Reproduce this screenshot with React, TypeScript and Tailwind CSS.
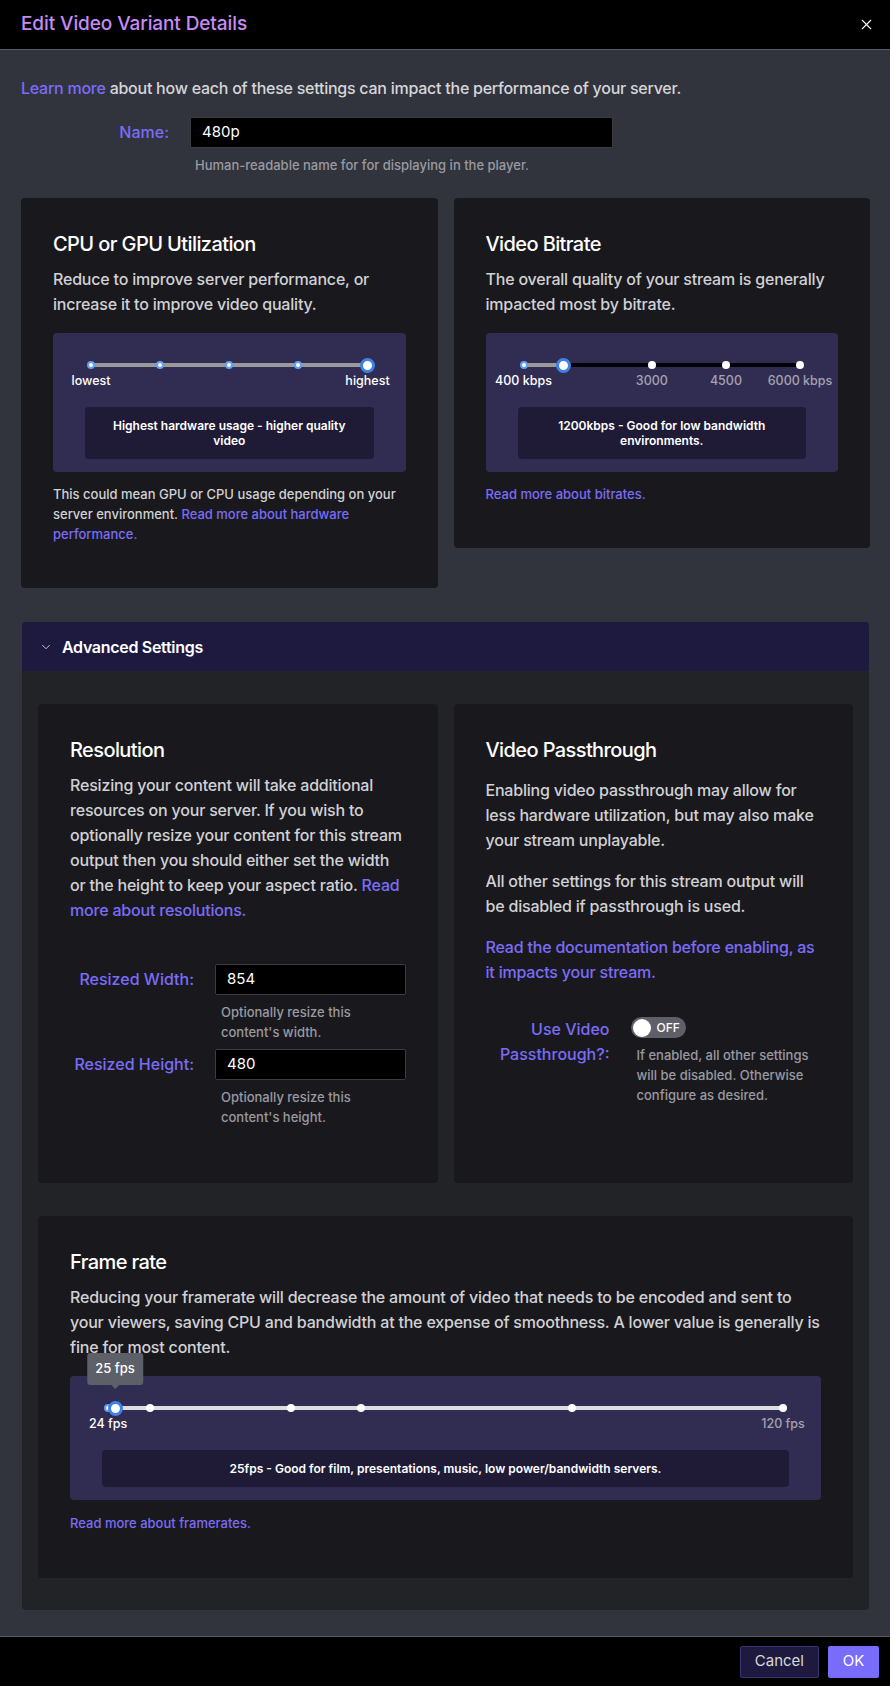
import { X, ChevronDown } from "lucide-react"

type Mark = { pos: number; label?: string; bright?: boolean; active?: boolean }

type SliderProps = {
  marks: Mark[]
  handle: number
  fill: string
  rail: string
  note: string
  tooltip?: string
}

// slider inside the purple box, dots are placed by percentage of the range
function Slider({ marks, handle, fill, rail, note, tooltip }: SliderProps) {
  return (
    <div className="bg-[#312c52] rounded-[4px] px-[32px] pb-[13px]">
      <div className="px-[6px] pt-[25px]">
        <div className="relative h-[14px]">
          <div className={`absolute left-0 right-0 top-[5px] h-[4px] rounded-full ${rail}`} />
          <div
            className={`absolute left-0 top-[5px] h-[4px] rounded-full ${fill}`}
            style={{ width: `${handle}%` }}
          />
          {marks.map((m, i) => (
            <div
              key={i}
              className={`absolute top-[3px] w-[8px] h-[8px] -ml-[4px] rounded-full bg-white ${
                m.active ? "border-2 border-[#62a0f5]" : ""
              }`}
              style={{ left: `${m.pos}%` }}
            />
          ))}
          <div
            className="absolute top-0 w-[15px] h-[15px] -ml-[7.5px] -mt-[0.5px] rounded-full bg-white border-[3px] border-[#3f82e6]"
            style={{ left: `${handle}%` }}
          />
          {tooltip && (
            <div
              className="absolute bottom-[26px] -translate-x-1/2 flex flex-col items-center"
              style={{ left: `${handle}%` }}
            >
              <div className="bg-[#5d5f69] rounded-[3px] px-[8px] h-[32px] flex items-center text-[13px] font-medium text-white whitespace-nowrap">
                {tooltip}
              </div>
              <div className="w-0 h-0 border-l-[4px] border-r-[4px] border-t-[4px] border-l-transparent border-r-transparent border-t-[#5d5f69]" />
            </div>
          )}
        </div>
        <div className="relative h-[18px]">
          {marks
            .filter((m) => m.label)
            .map((m, i) => (
              <span
                key={i}
                className={`absolute top-0 -translate-x-1/2 whitespace-nowrap text-[12.5px] leading-[18px] font-medium ${
                  m.bright ? "text-white" : "text-[#a3a3ad]"
                }`}
                style={{ left: `${m.pos}%` }}
              >
                {m.label}
              </span>
            ))}
        </div>
      </div>
      <div className="mt-[17px] bg-[#1f1b37] rounded-[4px] px-[20px] py-[11px] text-center text-[12px] leading-[15px] font-semibold text-white">
        {note}
      </div>
    </div>
  )
}

function Card({ title, children, className = "" }: { title: string; children: React.ReactNode; className?: string }) {
  return (
    <div className={`bg-[#19191d] rounded-[4px] px-[32px] pt-[31px] ${className}`}>
      <h3 className="text-[20px] leading-[30px] font-medium text-white tracking-[-0.6px]">{title}</h3>
      {children}
    </div>
  )
}

function Desc({
  children,
  className = "",
  color = "text-[#d1d1d5]",
}: {
  children: React.ReactNode
  className?: string
  color?: string
}) {
  return (
    <p className={`text-[16px] leading-[25px] font-medium tracking-[-0.2px] ${color} ${className}`}>{children}</p>
  )
}

const link = "text-[#7b6cf8]"

function FieldRow({ label, value, help }: { label: string; value: string; help: string }) {
  return (
    <div className="flex">
      <div className="w-[124px] shrink-0 text-right text-[16px] leading-[31px] font-medium text-[#7b6cf8]">{label}</div>
      <div className="flex-1 ml-[21px]">
        <div className="h-[31px] bg-black border border-[#3b3b40] rounded-[2px] flex items-center px-[11px] text-[15px] text-white">
          {value}
        </div>
        <p className="mt-[7px] pl-[6px] max-w-[165px] text-[13px] leading-[20px] font-medium text-[#9a9aa2]">{help}</p>
      </div>
    </div>
  )
}

export default function App() {
  return (
    <div className="w-[890px] min-h-[1686px] bg-[#31343c] font-['Inter',sans-serif] flex flex-col">
      {/* Header */}
      <div className="h-[50px] bg-black border-b border-[#5c5c5f] flex items-center justify-between pl-[21px] pr-[15px]">
        <h1 className="text-[19px] font-medium text-[#c58bf7] tracking-[-0.1px]">Edit Video Variant Details</h1>
        <X className="w-[17px] h-[17px] text-white" strokeWidth={1.5} />
      </div>

      {/* Body */}
      <div className="flex-1 pl-[21px] pr-[20px] pt-[27px] pb-[25px]">
        <p className="text-[16px] leading-[22px] font-medium text-[#d6d6da] tracking-[-0.25px]">
          <span className={link}>Learn more</span> about how each of these settings can impact the performance of your
          server.
        </p>

        <div className="mt-[18px] flex">
          <div className="w-[148px] shrink-0 text-right text-[16px] leading-[31px] font-medium text-[#7b6cf8]">Name:</div>
          <div className="ml-[21px] w-[423px]">
            <div className="h-[31px] bg-black border border-[#3b3b40] rounded-[2px] flex items-center px-[11px] text-[15px] text-white">
              480p
            </div>
            <p className="mt-[8px] pl-[5px] text-[13px] leading-[18px] font-medium text-[#9a9aa2]">
              Human-readable name for for displaying in the player.
            </p>
          </div>
        </div>

        {/* Top cards */}
        <div className="mt-[24px] grid grid-cols-2 gap-[16px] items-start">
          <Card title="CPU or GPU Utilization" className="pb-[44px]">
            <Desc className="mt-[8px]">Reduce to improve server performance, or increase it to improve video quality.</Desc>
            <div className="mt-[16px]">
              <Slider
                marks={[
                  { pos: 0, label: "lowest", bright: true, active: true },
                  { pos: 25, active: true },
                  { pos: 50, active: true },
                  { pos: 75, active: true },
                  { pos: 100, label: "highest", bright: true, active: true },
                ]}
                handle={100}
                fill="bg-[#9a9a9a]"
                rail="bg-black"
                note="Highest hardware usage - higher quality video"
              />
            </div>
            <p className="mt-[12px] text-[13px] leading-[20px] font-medium text-[#d1d1d5]">
              This could mean GPU or CPU usage depending on your server environment.{" "}
              <span className={link}>Read more about hardware performance.</span>
            </p>
          </Card>

          <Card title="Video Bitrate" className="pb-[44px]">
            <Desc className="mt-[8px]">The overall quality of your stream is generally impacted most by bitrate.</Desc>
            <div className="mt-[16px]">
              <Slider
                marks={[
                  { pos: 0, label: "400 kbps", bright: true, active: true },
                  { pos: 46.43, label: "3000" },
                  { pos: 73.21, label: "4500" },
                  { pos: 100, label: "6000 kbps" },
                ]}
                handle={14.29}
                fill="bg-[#9a9a9a]"
                rail="bg-black"
                note="1200kbps - Good for low bandwidth environments."
              />
            </div>
            <p className={`mt-[12px] text-[13px] leading-[20px] font-medium ${link}`}>Read more about bitrates.</p>
          </Card>
        </div>

        {/* Advanced settings */}
        <div className="mt-[34px] mx-[1px] rounded-[4px] overflow-hidden bg-[#222327]">
          <div className="h-[49px] bg-[#1e1a3f] flex items-center pl-[17px] gap-[9px]">
            <ChevronDown className="w-[14px] h-[14px] text-white" strokeWidth={1.25} />
            <span className="text-[16px] font-semibold text-white tracking-[-0.3px]">Advanced Settings</span>
          </div>

          <div className="px-[16px] pt-[33px] pb-[32px]">
            <div className="grid grid-cols-2 gap-[16px]">
              <Card title="Resolution" className="pb-[56px]">
                <Desc className="mt-[8px]">
                  Resizing your content will take additional resources on your server. If you wish to optionally resize
                  your content for this stream output then you should either set the width or the height to keep your
                  aspect ratio. <span className={link}>Read more about resolutions.</span>
                </Desc>
                <div className="mt-[41px] flex flex-col gap-[7px]">
                  <FieldRow label="Resized Width:" value="854" help="Optionally resize this content's width." />
                  <FieldRow label="Resized Height:" value="480" help="Optionally resize this content's height." />
                </div>
              </Card>

              <Card title="Video Passthrough" className="pb-[56px]">
                <Desc className="mt-[13px]">
                  Enabling video passthrough may allow for less hardware utilization, but may also make your stream
                  unplayable.
                </Desc>
                <Desc className="mt-[16px]">All other settings for this stream output will be disabled if passthrough is used.</Desc>
                <Desc className="mt-[16px]" color={link}>
                  Read the documentation before enabling, as it impacts your stream.
                </Desc>
                <div className="mt-[32px] flex">
                  <div className="w-[124px] shrink-0 text-right text-[16px] leading-[25px] font-medium text-[#7b6cf8]">
                    Use Video Passthrough?:
                  </div>
                  <div className="flex-1 ml-[21px]">
                    <div className="w-[55px] h-[21px] rounded-full bg-[#5e5f69] flex items-center pl-[2px] gap-[6px]">
                      <div className="w-[18px] h-[18px] rounded-full bg-white" />
                      <span className="text-[12px] font-medium text-white">OFF</span>
                    </div>
                    <p className="mt-[7px] pl-[6px] max-w-[190px] text-[13px] leading-[20px] font-medium text-[#9a9aa2]">
                      If enabled, all other settings will be disabled. Otherwise configure as desired.
                    </p>
                  </div>
                </div>
              </Card>
            </div>

            <Card title="Frame rate" className="mt-[33px] pb-[45px]">
              <Desc className="mt-[8px]">
                Reducing your framerate will decrease the amount of video that needs to be encoded and sent to your
                viewers, saving CPU and bandwidth at the expense of smoothness. A lower value is generally is fine for
                most content.
              </Desc>
              <div className="mt-[16px]">
                <Slider
                  marks={[
                    { pos: 0, label: "24 fps", bright: true, active: true },
                    { pos: 6.25 },
                    { pos: 27.08 },
                    { pos: 37.5 },
                    { pos: 68.75 },
                    { pos: 100, label: "120 fps" },
                  ]}
                  handle={1.04}
                  fill="bg-[#5b8fe0]"
                  rail="bg-[#dedee2]"
                  note="25fps - Good for film, presentations, music, low power/bandwidth servers."
                  tooltip="25 fps"
                />
              </div>
              <p className={`mt-[13px] text-[13px] leading-[20px] font-medium ${link}`}>Read more about framerates.</p>
            </Card>
          </div>
        </div>
      </div>

      {/* Footer */}
      <div className="h-[50px] bg-black border-t border-[#5c5c5f] flex items-center justify-end gap-[9px] pr-[11px]">
        <button className="h-[32px] px-[14px] bg-[#1e1a3f] border border-[#3a3372] rounded-[2px] text-[15px] text-[#d8d8dc]">
          Cancel
        </button>
        <button className="h-[32px] w-[51px] bg-[#7a6cfb] rounded-[2px] text-[15px] text-white">OK</button>
      </div>
    </div>
  )
}
